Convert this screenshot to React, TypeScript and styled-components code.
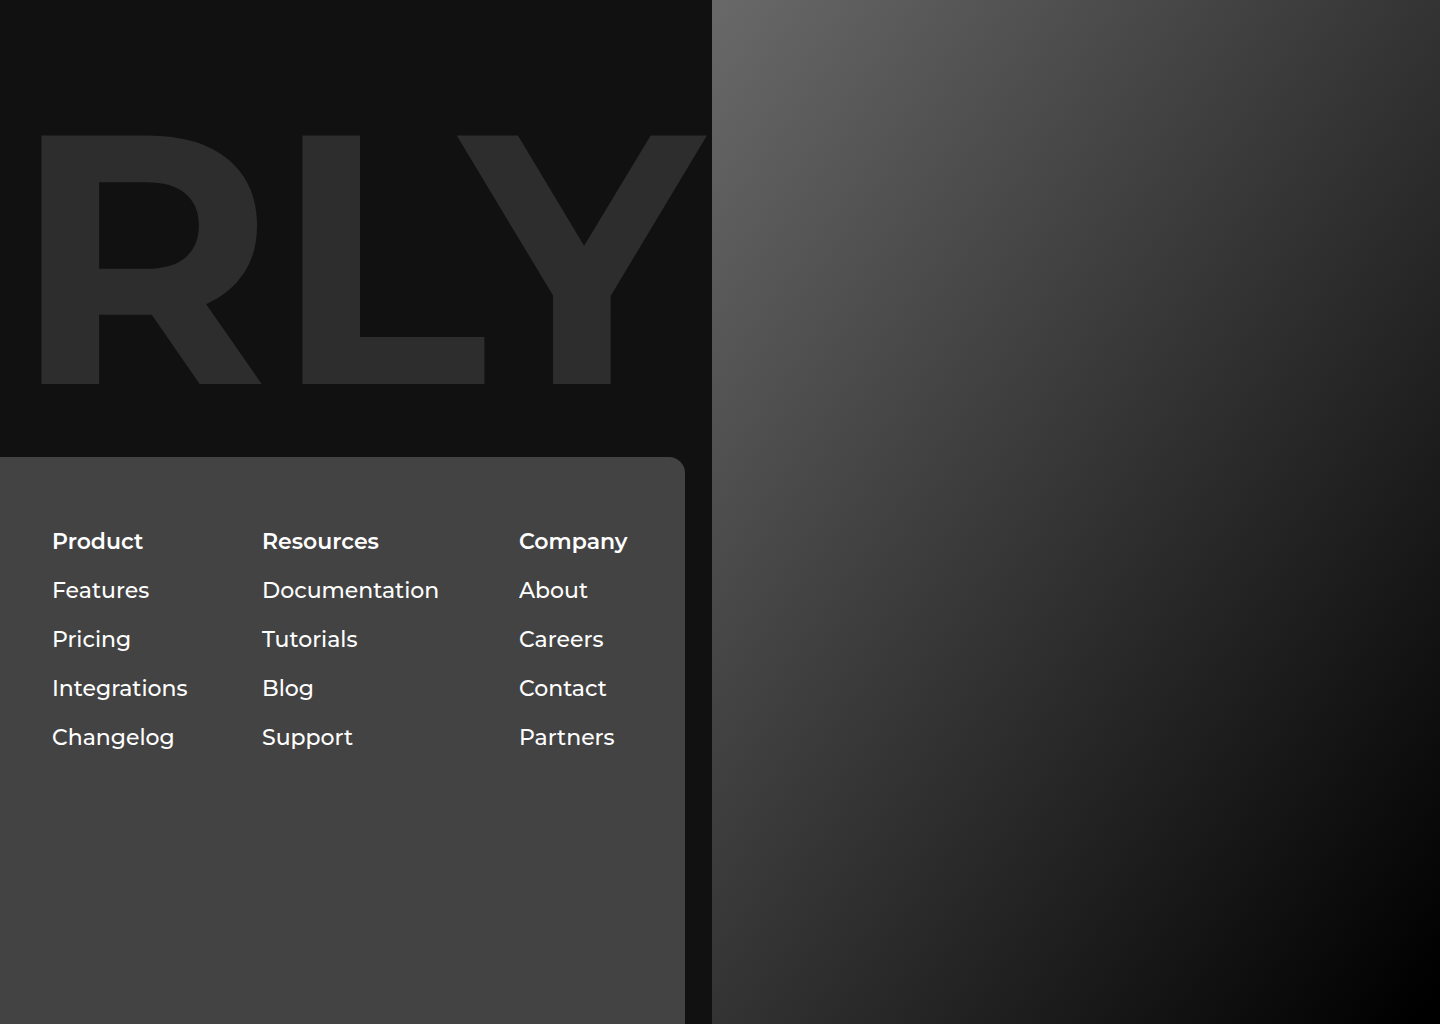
import React from "react";
import styled, { createGlobalStyle } from "styled-components";

const GlobalStyle = createGlobalStyle`
  *, *::before, *::after { box-sizing: border-box; }
  body {
    margin: 0;
    background: #111111;
    color: #ffffff;
    font-family: Montserrat, Inter, "Open Sans", sans-serif;
  }
`;

const Page = styled.main`
  display: grid;
  grid-template-columns: minmax(0, 712fr) minmax(0, 728fr);
  min-height: 100vh;
`;

const Left = styled.div`
  display: flex;
  flex-direction: column;
  min-width: 0;
`;

const Wordmark = styled.h1`
  margin: 0;
  padding: 57px 0 0 12px;
  font-size: 355px;
  line-height: 400px;
  font-weight: 700;
  color: #2d2d2d;
  white-space: nowrap;
`;

const Panel = styled.footer`
  flex: 1;
  margin-right: 27px;
  padding: 68px 52px;
  background: #434343;
  border-top-right-radius: 16px;
`;

const Columns = styled.nav`
  display: grid;
  grid-template-columns: 210fr 257fr 114fr;
`;

const Heading = styled.h2`
  margin: 0 0 15px;
  font-size: 22px;
  line-height: 34px;
  font-weight: 600;
`;

const List = styled.ul`
  display: grid;
  gap: 15px;
  margin: 0;
  padding: 0;
  list-style: none;
`;

const FooterLink = styled.a`
  display: block;
  font-size: 22px;
  line-height: 34px;
  font-weight: 500;
  color: inherit;
  text-decoration: none;
  white-space: nowrap;
`;

const Visual = styled.div`
  background: linear-gradient(to bottom right, #696969 0%, #000000 98%);
`;

const groups = [
  { title: "Product", links: ["Features", "Pricing", "Integrations", "Changelog"] },
  { title: "Resources", links: ["Documentation", "Tutorials", "Blog", "Support"] },
  { title: "Company", links: ["About", "Careers", "Contact", "Partners"] },
];

export default function App() {
  return (
    <>
      <GlobalStyle />
      <Page>
        <Left>
          <Wordmark>RLY</Wordmark>
          <Panel>
            <Columns aria-label="Footer">
              {groups.map((group) => (
                <section key={group.title}>
                  <Heading>{group.title}</Heading>
                  <List>
                    {group.links.map((link) => (
                      <li key={link}>
                        <FooterLink href={"#" + link.toLowerCase()}>{link}</FooterLink>
                      </li>
                    ))}
                  </List>
                </section>
              ))}
            </Columns>
          </Panel>
        </Left>
        <Visual />
      </Page>
    </>
  );
}
